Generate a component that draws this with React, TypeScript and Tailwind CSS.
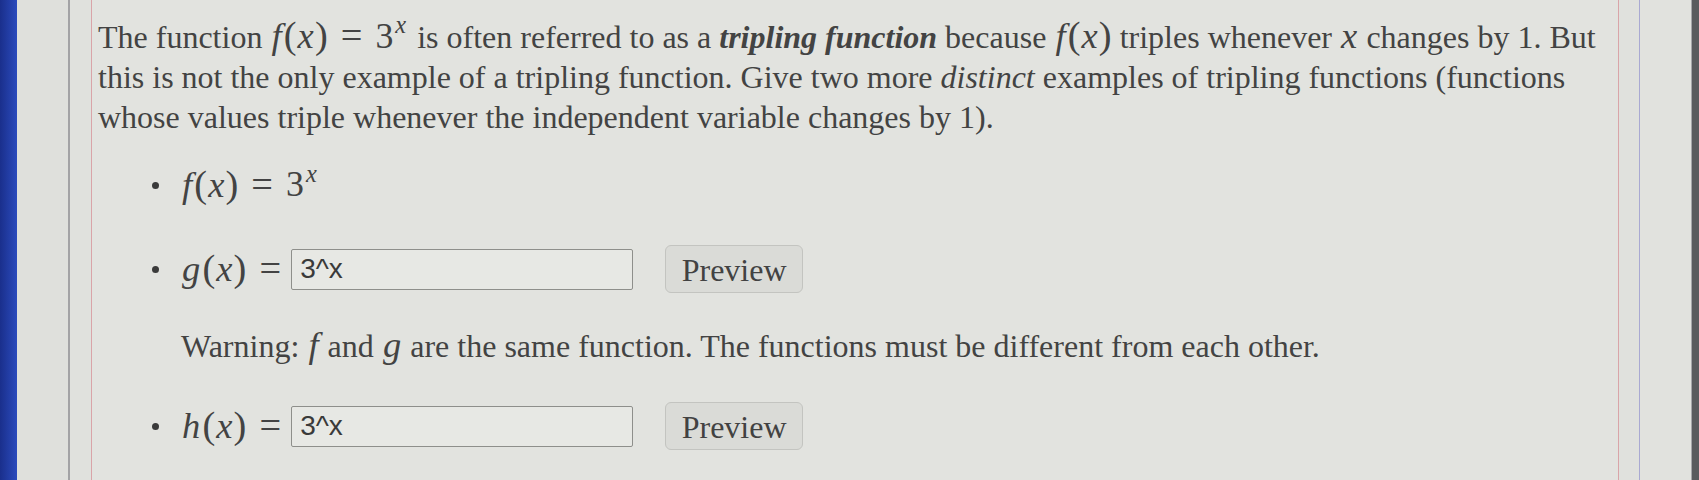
import React from 'react'

const serif = { fontFamily: '"Liberation Serif", "Times New Roman", serif' }

function V({ children }: { children: React.ReactNode }) {
  return <span className="italic text-[1.14em] mx-[0.03em]">{children}</span>
}

function Eq() {
  return <span className="mx-[0.34em] text-[1.2em]">=</span>
}

function Fn({ name }: { name: string }) {
  return (
    <span className="whitespace-nowrap">
      <V>{name}</V>
      <span className="ml-[1px] text-[1.2em]">(</span>
      <V>x</V>
      <span className="text-[1.2em]">)</span>
    </span>
  )
}

function Pow() {
  return (
    <span className="whitespace-nowrap text-[1.12em]">
      3<sup className="text-[0.68em] italic -top-[0.6em] ml-[2px] mr-[3px]">x</sup>
    </span>
  )
}

function AnswerRow({ name }: { name: string }) {
  return (
    <li className="flex items-center h-[48px]">
      <span className="w-[7px] h-[7px] rounded-full bg-[#3a3a3a] ml-[54px] mr-[22px]" />
      <Fn name={name} />
      <Eq />
      <div className="-ml-[3px] w-[342px] h-[41px] border border-[#8e8f8b] bg-[#e7e8e4] rounded-[2px] flex items-center px-[8px]">
        <span className="text-[28px] text-[#3a3a3a]" style={{ fontFamily: '"Liberation Sans", Arial, sans-serif' }}>
          3^x
        </span>
      </div>
      <button className="ml-[32px] w-[138px] h-[48px] rounded-[6px] border border-[#c3c4c0] bg-[#dadbd7] text-[32px] text-[#424242]">
        Preview
      </button>
    </li>
  )
}

export default function App() {
  return (
    <div className="w-[1699px] h-[480px] flex bg-[#e2e3df] overflow-hidden">
      {/* left gutter */}
      <div className="w-[17px] h-full bg-gradient-to-r from-[#1a2f8c] to-[#2b4bbd]" />
      <div className="w-[53px] h-full bg-[#dfe0dc] border-r-2 border-[#a3a3a5]" />
      <div className="w-[21px] h-full bg-[#e0e1dd]" />

      {/* content */}
      <div
        className="flex-1 h-full border-l border-r border-[#d9a4a8] pl-[6px] pr-[4px] pt-[15px] text-[32px] text-[#434343]"
        style={serif}
      >
        <p className="leading-[40px]">
          The function <Fn name="f" />
          <Eq />
          <Pow /> is often referred to as a <b className="italic font-bold">tripling function</b> because{' '}
          <Fn name="f" /> triples whenever <V>x</V> changes by 1. But this is not the only example of a tripling
          function. Give two more <i>distinct</i> examples of tripling functions (functions whose values triple
          whenever the independent variable changes by 1).
        </p>

        <ul className="mt-[28px]">
          <li className="flex items-center h-[40px]">
            <span className="w-[7px] h-[7px] rounded-full bg-[#3a3a3a] ml-[54px] mr-[22px]" />
            <Fn name="f" />
            <Eq />
            <Pow />
          </li>
        </ul>

        <ul className="mt-[40px]">
          <AnswerRow name="g" />
        </ul>

        <p className="mt-[32px] h-[40px] leading-[40px] pl-[83px]">
          Warning: <V>f</V> and <V>g</V> are the same function. The functions must be different from each other.
        </p>

        <ul className="mt-[37px]">
          <AnswerRow name="h" />
        </ul>
      </div>

      {/* right gutter */}
      <div className="w-[20px] h-full bg-[#e0e1dd]" />
      <div className="w-[53px] h-full bg-[#e1e2de] border-l border-r border-l-[#a9a9d2] border-r-[#a5a5a9]" />
      <div className="w-[7px] h-full bg-[#5a5b5e]" />
    </div>
  )
}
